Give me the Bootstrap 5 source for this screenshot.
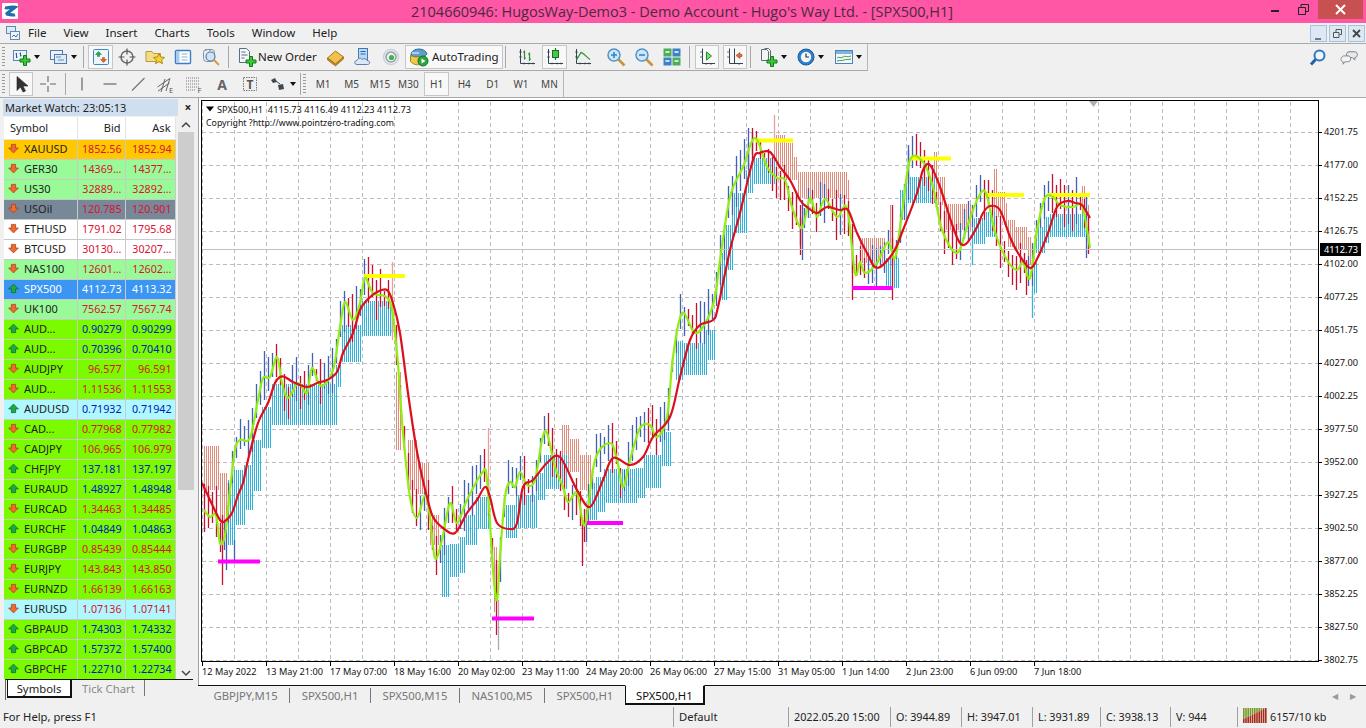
<!DOCTYPE html>
<html lang="en">
<head>
<meta charset="UTF-8">
<title>MetaTrader - SPX500,H1</title>
<link href="https://cdn.jsdelivr.net/npm/bootstrap@5.3.0/dist/css/bootstrap.min.css" rel="stylesheet">
<style>
  html, body { height: 728px; overflow: hidden; }
  body { background: #f0f0f0; font-family: "Noto Sans", sans-serif; font-size: 12px; color: #222; }
  .title-bar { height: 23px; background: #ff56a6; color: #4a2a3c; font-family: "Open Sans", sans-serif; font-size: 14.5px; }
  .title-text { left: 0; right: 0; top: 0; line-height: 23px; text-align: center; padding-right: 2px; }
  .app-logo { width: 16px; height: 16px; margin-left: 2px; margin-top: 3px; }
  .win-btn { width: 28px; height: 19px; }
  .win-close { width: 45px; height: 19px; background: #c75050; margin-left: 1px; margin-right: 3px; }
  .menu-bar { height: 21px; border-bottom: 1px solid #a9a9a9; padding-left: 5px; gap: 17px; font-size: 11.5px; }
  .menu-bar .menu-ico { width: 16px; height: 16px; margin-right: -10px; }
  .mdi-wrap { margin-right: 1px; }
  .mdi-btn { width: 17px; height: 17px; background: #dce9f5; border: 1px solid #a9c2da; margin-left: 2px; }
  .tool-row { height: 27px; }
  .tool-group { height: 27px; border-bottom: 1px solid #a9a9a9; }
  .row-a { width: 868px; border-right: 1px solid #b8b8b8; }
  .row-b { width: 564px; border-right: 1px solid #b8b8b8; }
  .row-fill { border-bottom: 1px solid #a9a9a9; height: 27px; }
  .row-plain { height: 27px; }
  .grip { width: 3px; height: 20px; margin: 0 3px 0 2px; background: repeating-linear-gradient(#9a9a9a 0 1px, transparent 1px 3px); flex: none; }
  .sep { width: 1px; height: 22px; background: #a8a8a8; flex: none; }
  .tool { height: 24px; flex: none; display: flex; align-items: center; justify-content: center; }
  .tool svg { width: 20px; height: 20px; flex: none; }
  .pressed { background: #f8f8f8; border: 1px solid #c6c6c6; }
  .drop { width: 0; height: 0; border: 3.5px solid transparent; border-top: 4px solid #111; border-bottom: 0; margin-left: 2px; flex: none; }
  .w1 { margin-left: 1px; } .w2 { margin-left: 2px; } .w3 { margin-left: 3px; } .w4 { margin-left: 4px; } .w5 { margin-left: 5px; } .w6 { margin-left: 6px; }
  .t24 { width: 24px; } .t25 { width: 25px; } .t27 { width: 27px; } .t28 { width: 28px; } .t30 { width: 30px; }
  .t32 { width: 32px; } .t34 { width: 34px; } .t35 { width: 35px; } .t36 { width: 36px; } .t37 { width: 37px; } .t38 { width: 38px; }
  .tool-wide { width: 90px; justify-content: flex-start; padding-left: 5px; gap: 1px; font-size: 11.5px; }
  .tool-auto { width: 98px; justify-content: flex-start; padding-left: 3px; gap: 3px; font-size: 11.5px; }
  .tf { width: 28.4px; height: 24px; font-size: 10px; color: #444; flex: none; display: flex; align-items: center; justify-content: center; }
  .tf-on { width: 25px; margin-left: 1.5px; margin-right: 1px; background: #f8f8f8; border: 1px solid #c6c6c6; }
  .left-panel { width: 198px; flex: none; height: 608px; }
  .mw-head { height: 17px; margin: 1px 0 1px 3px; width: 175px; background: #cfdff0; line-height: 17px; padding-left: 2px; font-size: 11px; }
  .mw-x { width: 20px; text-align: center; font-weight: 700; line-height: 17px; font-size: 12px; margin-top: 1px; }
  .mw-body { height: 562px; padding-left: 4px; }
  .mw-table { width: 171px; table-layout: fixed; font-size: 10.7px; background: #fff; }
  .mw-table th { height: 22px; font-weight: 400; background: #fff; border-right: 1px solid #e4e4e4; border-bottom: 1px solid #e4e4e4; padding: 0 4px; text-align: right; font-size: 11px; }
  .mw-table th:first-child { text-align: left; padding-left: 6px; }
  .mw-table td { height: 20px; padding: 0 3px 0 0; text-align: right; border-right: 1px solid #c9c9c9; border-bottom: 1px solid #c9c9c9; white-space: nowrap; overflow: hidden; }
  .mw-table td:first-child { text-align: left; padding-left: 4px; font-size: 11px; }
  .mw-table svg { width: 11px; height: 11px; margin-right: 5px; vertical-align: -1px; }
  .c-sym { width: 73px; } .c-bid { width: 48px; } .c-ask { width: 50px; }
  .bg-gold { background: #ffc800; } .bg-pale { background: #98fb98; } .bg-slate { background: #778899; }
  .bg-white2 { background: #fff; } .bg-sel { background: #3b96f3; color: #fff; } .bg-lawn { background: #7cfa00; } .bg-aqua { background: #b0f8ff; }
  .px-dn { color: #dc1030; } .px-up { color: #0018c0; } .px-wh { color: #fff; }
  .scroll-v { width: 16px; margin-left: 2px; height: 562px; background: #f0f0f0; }
  .scroll-top { height: 15px; }
  .scroll-thumb { height: 358px; background: #cdcdcd; }
  .scroll-end { bottom: 2px; left: 3px; }
  .side-tabs { height: 21px; margin-left: 5px; width: 188px; border-top: 1px solid #111; border-left: 1px solid #666; font-size: 11.3px; }
  .side-tab-on { width: 65px; height: 19px; margin-left: 1px; margin-top: -1px; background: #fff; border: 1px solid #111; border-top: 1px solid #111; border-right-width: 2px; border-bottom-width: 2px; text-align: center; line-height: 17px; }
  .side-tab { color: #8a8a8a; padding: 0 9px; line-height: 18px; border-right: 1px solid #777; height: 16px; margin-left: 1px; }
  .chart-col { width: 1168px; }
  .chart-svg { width: 1168px; height: 587px; display: block; background: #fff; }
  .chart-svg text { font-family: "Noto Sans", sans-serif; font-size: 9.2px; fill: #111; }
  .chart-svg text.copy-line { font-size: 8.800px; }
  .chart-tabs { height: 21px; padding-left: 4px; font-size: 11.3px; color: #777; border-top: 1px solid #111; }
  .ctab { padding: 0 11.500px; border-right: 1px solid #777; height: 15px; line-height: 15px; margin-top: 2px; }
  .ctab-last { border-right: 0; }
  .ctab-on { color: #111; background: #fff; width: 80px; height: 20px; margin-top: -1px; text-align: center; line-height: 19px; border: 1px solid #111; border-top-color: #fff; border-right-width: 2px; border-bottom-width: 2px; }
  .tab-arrow { color: #999; font-size: 8px; width: 18px; text-align: center; line-height: 19px; }
  .status-bar { height: 22px; font-size: 11.2px; line-height: 22px; padding-left: 3px; }
  .st { border-left: 1px solid #a0a0a0; height: 20px; line-height: 20px; padding-left: 5px; margin-top: 1px; flex: none; }
  .st-num { font-size: 10.8px; }
  .st115 { width: 115px; } .st102 { width: 102px; } .st71 { width: 71px; } .st68 { width: 68px; } .st70 { width: 70px; } .st67 { width: 67px; } .st129 { width: 129px; }
  .kb-bars { width: 24px; height: 16px; vertical-align: -3px; margin-right: 3px; }
</style>
</head>
<body>

<svg class="d-none">
  <symbol id="plus" viewBox="0 0 20 20"><path d="M11.500 8.500h3v3.500h3.500v3h-3.500v3.500h-3v-3.500h-3.500v-3h3.500z" fill="#38c838" stroke="#127c12"/></symbol>
  <symbol id="i-newchart" viewBox="0 0 20 20"><rect x="1.500" y="3.500" width="13" height="10" fill="#eaf2fb" stroke="#5a86b4"/><path d="M4.500 6v5M3.500 7h1M4.500 10h1M8.500 5.500v4M7.500 6.500h1M8.500 8.500h1" stroke="#2f5f8f"/><use href="#plus"/></symbol>
  <symbol id="i-profiles" viewBox="0 0 20 20"><rect x="1.500" y="3.500" width="12" height="9" fill="#eaf2fb" stroke="#4d7cb0"/><rect x="5.500" y="7.500" width="12" height="9" fill="#dfeaf6" stroke="#4d7cb0"/><path d="M7 10h5M9 13h6" stroke="#6a8fb5"/></symbol>
  <symbol id="i-watch" viewBox="0 0 20 20"><rect x="2.500" y="2.500" width="15" height="15" rx="1" fill="#eef6fc" stroke="#3c86c8"/><path d="M7.500 4.500l3 3h-2v2h-2v-2h-2z" fill="#2aa84a" stroke="#16743a" stroke-width=".5"/><path d="M12.500 15.500l-3-3h2v-2h2v2h2z" fill="#e8622c" stroke="#a83c14" stroke-width=".5"/></symbol>
  <symbol id="i-cross" viewBox="0 0 20 20"><circle cx="10" cy="10" r="6" fill="none" stroke="#6a6a6a" stroke-width="1.500"/><path d="M10 1.500v6M10 12.500v6M1.500 10h6M12.500 10h6" stroke="#555" stroke-width="1.200"/></symbol>
  <symbol id="i-folder" viewBox="0 0 20 20"><path d="M1 4.500h6l1.500 2h7v8H1z" fill="#f6dc84" stroke="#b99a3c"/><path d="M14 6.500l1.600 3.500 3.900.4-2.900 2.500.9 3.800-3.500-2-3.500 2 .9-3.800-2.900-2.500 3.900-.4z" fill="#f8d030" stroke="#b08a18"/></symbol>
  <symbol id="i-nav" viewBox="0 0 20 20"><rect x="2.500" y="3.500" width="15" height="13" rx="1" fill="#fff" stroke="#3a7dc0" stroke-width="1.400"/><rect x="3" y="4" width="3.500" height="12" fill="#a8cdf0"/><path d="M8.500 7h6M8.500 10h6M8.500 13h6" stroke="#8ab0d4"/></symbol>
  <symbol id="i-tester" viewBox="0 0 20 20"><rect x="2.500" y="2.500" width="11" height="12" rx="3" fill="#e6edf6" stroke="#7f93aa"/><circle cx="9.500" cy="9.500" r="4.500" fill="#cfe3f6" stroke="#5c7a9a" stroke-width="1.200"/><path d="M13 13l5 5" stroke="#d89a3a" stroke-width="2"/><path d="M5 2v2M9 2v2" stroke="#6c7f95"/></symbol>
  <symbol id="i-order" viewBox="0 0 20 20"><path d="M2.500 1.500h7l3 3v11h-10z" fill="#f4f6f8" stroke="#566d82"/><path d="M4.500 5h4M4.500 8h6M4.500 11h3" stroke="#4f6f90"/><use href="#plus" x="1" y="1"/></symbol>
  <symbol id="i-book" viewBox="0 0 20 20"><path d="M1.500 11l8-7 8 6-8 7z" fill="#f2c04c" stroke="#a87a1c"/><path d="M1.500 11v2l8 6 8-7v-2l-8 7z" fill="#c88a24" stroke="#8a5f14" stroke-width=".6"/></symbol>
  <symbol id="i-server" viewBox="0 0 20 20"><rect x="5.500" y="1.500" width="9" height="12" fill="#bcd8f2" stroke="#3f78b8"/><path d="M7.500 4.500h5M7.500 7h5" stroke="#2f66a4"/><path d="M4 17.500c-3 0-3-4 0-4 .5-2.500 4-3 5-1 2-1.500 4.500-1 5 1 3.500 0 3.500 4 .5 4z" fill="#dce8f6" stroke="#5f80ac"/></symbol>
  <symbol id="i-signal" viewBox="0 0 20 20"><circle cx="10" cy="10" r="7.500" fill="none" stroke="#c8d2d8" stroke-width="1.500"/><circle cx="10" cy="10" r="5" fill="none" stroke="#8ca0aa" stroke-width="1.500"/><circle cx="10.500" cy="10.500" r="2.600" fill="#46b04a"/></symbol>
  <symbol id="i-auto" viewBox="0 0 20 20"><path d="M2 8c0-4 4-6 8-6s7 2 8 5l-4 3H5z" fill="#5e9fd0" stroke="#2f6d9f"/><path d="M1.500 8.500c4 2 10 2 13 0l1 5-4 4c-4 1-8-.5-10-3z" fill="#f2c84a" stroke="#a58420"/><path d="M3 6h7" stroke="#fff"/><circle cx="14" cy="14" r="5" fill="#2aa83c" stroke="#12742a"/><path d="M12.500 11.500l4 2.500-4 2.500z" fill="#fff"/></symbol>
  <symbol id="i-bars" viewBox="0 0 20 20"><path d="M3.500 2v14.500H18" stroke="#33434f" fill="none"/><path d="M2 5h3M2 10h3M7 17.500v-2M12 17.500v-2M16 17.500v-2" stroke="#33434f" stroke-width=".7"/><path d="M7.500 3.500v9M6 5h1.500M7.500 11H9M12.500 5.500v8.500M11 7h1.500M12.500 12H14" stroke="#2f8a3a" stroke-width="1.200"/></symbol>
  <symbol id="i-candle" viewBox="0 0 20 20"><path d="M3.500 2v14.500H18" stroke="#33434f" fill="none"/><path d="M2 5h3M2 10h3M7 17.500v-2M12 17.500v-2M16 17.500v-2" stroke="#33434f" stroke-width=".7"/><path d="M10.500 1v12" stroke="#16741e" stroke-width="1.200"/><rect x="7.500" y="3.500" width="6" height="7" fill="#42c84a" stroke="#16741e"/></symbol>
  <symbol id="i-line" viewBox="0 0 20 20"><path d="M3.500 2v14.500H18" stroke="#33434f" fill="none"/><path d="M2 5h3M2 10h3M7 17.500v-2M12 17.500v-2M16 17.500v-2" stroke="#33434f" stroke-width=".7"/><path d="M3.500 13L8 5.500c2 0 5 4 9 7" stroke="#2f9a3f" stroke-width="1.300" fill="none"/></symbol>
  <symbol id="i-zin" viewBox="0 0 20 20"><circle cx="8" cy="8" r="6" fill="#cfe6f8" stroke="#4f94c8" stroke-width="1.500"/><path d="M5 8h6M8 5v6" stroke="#3585c0" stroke-width="1.600"/><path d="M12.500 12.500l6 6" stroke="#c89438" stroke-width="2.600"/></symbol>
  <symbol id="i-zout" viewBox="0 0 20 20"><circle cx="8" cy="8" r="6" fill="#cfe6f8" stroke="#4f94c8" stroke-width="1.500"/><path d="M5 8h6" stroke="#3585c0" stroke-width="1.600"/><path d="M12.500 12.500l6 6" stroke="#c89438" stroke-width="2.600"/></symbol>
  <symbol id="i-tile" viewBox="0 0 20 20"><rect x="1.500" y="1.500" width="8" height="8" fill="#4cae5a"/><rect x="10.500" y="1.500" width="8" height="8" fill="#3c82c8"/><rect x="1.500" y="10.500" width="8" height="8" fill="#3c82c8"/><rect x="10.500" y="10.500" width="8" height="8" fill="#4cae5a"/><path d="M3.500 5h4M12.500 5h4M3.500 14h4M12.500 14h4" stroke="#fff" stroke-width="1.500"/></symbol>
  <symbol id="i-scroll" viewBox="0 0 20 20"><path d="M5.500 1.500v15H18" stroke="#33434f" fill="none"/><path d="M3 5h3M3 10h3M9 18v-2M14 18v-2" stroke="#33434f" stroke-width=".7"/><path d="M9.500 5l5 4-5 4z" fill="#7adf6a" stroke="#1f8a2c"/></symbol>
  <symbol id="i-shift" viewBox="0 0 20 20"><path d="M4.500 1.500v15H18M9.500 1.500v15" stroke="#33434f" fill="none"/><path d="M2 5h3M2 10h3M14 18v-2" stroke="#33434f" stroke-width=".7"/><path d="M11 8.500l4-3v2h2v2h-2v2z" fill="#e0703c" stroke="#a33c18" stroke-width=".6"/></symbol>
  <symbol id="i-docplus" viewBox="0 0 20 20"><path d="M2.500 2.500h5l2 2v9h-7z" fill="#f2f3f5" stroke="#5f6a74"/><path d="M5.500 1.500h4l2 2v6" fill="none" stroke="#5f6a74"/><use href="#plus" x="0" y="1"/></symbol>
  <symbol id="i-clock" viewBox="0 0 20 20"><circle cx="10" cy="10" r="8" fill="#2f80c8" stroke="#1a5a96"/><circle cx="10" cy="10" r="5.200" fill="#f2f7fb"/><path d="M10 6.500V10h3" stroke="#333" stroke-width="1.200" fill="none"/></symbol>
  <symbol id="i-tmpl" viewBox="0 0 20 20"><rect x="1.500" y="3.500" width="17" height="13" fill="#f2f7fb" stroke="#4d82b4"/><rect x="2" y="4" width="16" height="3" fill="#7fb2dc"/><path d="M3 11c2-2 4 1 6-1s4 1 8-1M3 14c3-1 5 0 7-1s4 0 7-1" stroke="#4a9a50" fill="none"/></symbol>
  <symbol id="i-search" viewBox="0 0 20 20"><circle cx="11.500" cy="7.500" r="5" fill="#eef6fd" stroke="#2f75c4" stroke-width="2"/><path d="M7.500 11.500L3 16.500" stroke="#2460a8" stroke-width="3"/></symbol>
  <symbol id="i-chat" viewBox="0 0 24 20"><path d="M12 2.500h7c4 0 4 7 0 7v3l-3-3h-4c-4 0-4-7 0-7z" fill="#e6e8ea" stroke="#666c72"/><path d="M6 7.500h5c4 0 4 7 0 7H7l-2 3v-3c-4 0-3-7 1-7z" fill="#f2f3f4" stroke="#72787e"/></symbol>
  <symbol id="i-arrow" viewBox="0 0 20 20"><path d="M6 2.500v14l3.500-3.500 2.500 5 2.500-1-2.500-5H17z" fill="#333" stroke="#222" stroke-width=".6"/></symbol>
  <symbol id="i-thin" viewBox="0 0 20 20"><path d="M10 2v6M10 12v6M2 10h6M12 10h6" stroke="#666" stroke-width="1.100"/></symbol>
  <symbol id="i-vline" viewBox="0 0 20 20"><path d="M10 3.500v13" stroke="#666" stroke-width="1.200"/></symbol>
  <symbol id="i-hline" viewBox="0 0 20 20"><path d="M3.500 10h13" stroke="#666" stroke-width="1.200"/></symbol>
  <symbol id="i-trend" viewBox="0 0 20 20"><path d="M4 16.500L16.500 4" stroke="#777" stroke-width="1.200"/></symbol>
  <symbol id="i-channel" viewBox="0 0 20 20"><path d="M1.500 13L13 5M2 17l11.500-8M5 18L9 5M10 17l4-13" stroke="#666"/><text x="13" y="19" font-size="7.500" fill="#555" font-family="Noto Sans, sans-serif">E</text></symbol>
  <symbol id="i-fibo" viewBox="0 0 20 20"><path d="M2 4h13M2 7h13M2 10h13M2 13h13M2 16h9" stroke="#777" stroke-dasharray="1 1"/><text x="13.500" y="19" font-size="7.500" fill="#555" font-family="Noto Sans, sans-serif">F</text></symbol>
  <symbol id="i-atext" viewBox="0 0 20 20"><text x="10" y="15.500" text-anchor="middle" font-size="14" fill="#666" font-weight="700" font-family="Noto Sans, sans-serif">A</text></symbol>
  <symbol id="i-ttext" viewBox="0 0 20 20"><rect x="3.500" y="3.500" width="13" height="13" fill="none" stroke="#777" stroke-dasharray="1.500 1"/><text x="10" y="14.500" text-anchor="middle" font-size="12" fill="#555" font-weight="700" font-family="Noto Sans, sans-serif">T</text></symbol>
  <symbol id="i-arrows" viewBox="0 0 20 20"><path d="M3 6l4-2 2 4-4 1z" fill="#3e4a52"/><path d="M10 11l5-1 1 5-5 1z" fill="#3e4a52"/><path d="M8 7l4 3" stroke="#3e4a52"/></symbol>
  <symbol id="tk-up" viewBox="0 0 12 12"><path d="M6 1.200L11.300 6.500H8.300V10.500H3.700V6.500H.7z" fill="#1fa84a" stroke="#0c6a2c" stroke-width=".8"/></symbol>
  <symbol id="tk-dn" viewBox="0 0 12 12"><path d="M6 10.800L.7 5.500H3.700V1.500H8.300V5.500H11.300z" fill="#ee6a30" stroke="#a83c14" stroke-width=".8"/></symbol>
</svg>

<div class="d-flex flex-column vh-100 overflow-hidden">

  <div class="title-bar d-flex align-items-start position-relative flex-none">
    <svg class="app-logo position-relative z-1" viewBox="0 0 16 16"><rect width="16" height="16" rx="1" fill="#fff"/><path d="M3 4.500c3 1.200 7-1.200 10-.2L4 11.300c3-.8 6 1.500 9 .5" fill="none" stroke="#1d6fa8" stroke-width="3.200"/></svg>
    <div class="title-text position-absolute">2104660946: HugosWay-Demo3 - Demo Account - Hugo's Way Ltd. - [SPX500,H1]</div>
    <div class="ms-auto d-flex position-relative z-1">
      <div class="win-btn d-flex align-items-center justify-content-center"><svg width="10" height="10" viewBox="0 0 10 10"><path d="M1 6h8" stroke="#222" stroke-width="2"/></svg></div>
      <div class="win-btn d-flex align-items-center justify-content-center"><svg width="11" height="11" viewBox="0 0 11 11"><path d="M.5 3.500h7v7h-7zM3 3V.500h7.500v7H8" fill="none" stroke="#222"/></svg></div>
      <div class="win-close d-flex align-items-center justify-content-center"><svg width="11" height="11" viewBox="0 0 11 11"><path d="M1 1l9 9M10 1l-9 9" stroke="#fff" stroke-width="2"/></svg></div>
    </div>
  </div>

  <div class="menu-bar d-flex align-items-center">
    <svg class="menu-ico" viewBox="0 0 16 16"><rect x="1.500" y="1.500" width="9" height="7" fill="#dfeaf6" stroke="#5f8ab4"/><rect x="5.500" y="6.500" width="9" height="8" fill="#eef4fa" stroke="#5f8ab4"/><path d="M7 12l2-2 2 2 2-3" stroke="#3c6f9f" fill="none"/></svg>
    <span>File</span><span>View</span><span>Insert</span><span>Charts</span><span>Tools</span><span>Window</span><span>Help</span>
    <div class="ms-auto d-flex mdi-wrap">
      <div class="mdi-btn d-flex align-items-end justify-content-center"><svg width="9" height="9" viewBox="0 0 9 9"><path d="M1 7h6" stroke="#555" stroke-width="1.500"/></svg></div>
      <div class="mdi-btn d-flex align-items-center justify-content-center"><svg width="11" height="11" viewBox="0 0 11 11"><path d="M1.500 4.500h5.500v5h-5.500zM4 4V1.500h5.500v5H7.500" fill="none" stroke="#555"/></svg></div>
      <div class="mdi-btn d-flex align-items-center justify-content-center"><svg width="11" height="11" viewBox="0 0 11 11"><path d="M2 2l7 7M9 2l-7 7" stroke="#444" stroke-width="1.800"/></svg></div>
    </div>
  </div>

  <div class="tool-row d-flex">
    <div class="tool-group row-a d-flex align-items-center">
      <span class="grip"></span>
      <div class="tool t35"><svg><use href="#i-newchart"/></svg><span class="drop"></span></div>
      <div class="tool t35 w2"><svg><use href="#i-profiles"/></svg><span class="drop"></span></div>
      <span class="sep w3"></span>
      <div class="tool t25 pressed w4"><svg><use href="#i-watch"/></svg></div>
      <div class="tool t28"><svg><use href="#i-cross"/></svg></div>
      <div class="tool t28"><svg><use href="#i-folder"/></svg></div>
      <div class="tool t28"><svg><use href="#i-nav"/></svg></div>
      <div class="tool t28"><svg><use href="#i-tester"/></svg></div>
      <span class="sep w3"></span>
      <div class="tool tool-wide w3"><svg><use href="#i-order"/></svg><span>New Order</span></div>
      <div class="tool t27"><svg><use href="#i-book"/></svg></div>
      <div class="tool t28"><svg><use href="#i-server"/></svg></div>
      <div class="tool t28"><svg><use href="#i-signal"/></svg></div>
      <div class="tool tool-auto pressed"><svg><use href="#i-auto"/></svg><span>AutoTrading</span></div>
      <span class="sep w2"></span>
      <div class="tool t30 w6"><svg><use href="#i-bars"/></svg></div>
      <div class="tool t25 pressed"><svg><use href="#i-candle"/></svg></div>
      <div class="tool t32"><svg><use href="#i-line"/></svg></div>
      <div class="tool t28 w3"><svg><use href="#i-zin"/></svg></div>
      <div class="tool t28"><svg><use href="#i-zout"/></svg></div>
      <div class="tool t28"><svg><use href="#i-tile"/></svg></div>
      <span class="sep w3"></span>
      <div class="tool t24 pressed w5"><svg><use href="#i-scroll"/></svg></div>
      <div class="tool t24 pressed w4"><svg><use href="#i-shift"/></svg></div>
      <span class="sep w3"></span>
      <div class="tool t37 w3"><svg><use href="#i-docplus"/></svg><span class="drop"></span></div>
      <div class="tool t38"><svg><use href="#i-clock"/></svg><span class="drop"></span></div>
      <div class="tool t37"><svg><use href="#i-tmpl"/></svg><span class="drop"></span></div>
    </div>
    <div class="row-plain flex-grow-1 d-flex align-items-center justify-content-end">
      <div class="tool t28"><svg><use href="#i-search"/></svg></div>
      <div class="tool t34"><svg><use href="#i-chat"/></svg></div>
    </div>
  </div>

  <div class="tool-row d-flex">
    <div class="tool-group row-b d-flex align-items-center">
      <span class="grip"></span>
      <div class="tool t24 pressed w1"><svg><use href="#i-arrow"/></svg></div>
      <div class="tool t28 w1"><svg><use href="#i-thin"/></svg></div>
      <span class="sep w3"></span>
      <div class="tool t28 w2"><svg><use href="#i-vline"/></svg></div>
      <div class="tool t28"><svg><use href="#i-hline"/></svg></div>
      <div class="tool t28"><svg><use href="#i-trend"/></svg></div>
      <div class="tool t28"><svg><use href="#i-channel"/></svg></div>
      <div class="tool t28"><svg><use href="#i-fibo"/></svg></div>
      <div class="tool t28"><svg><use href="#i-atext"/></svg></div>
      <div class="tool t28"><svg><use href="#i-ttext"/></svg></div>
      <div class="tool t36"><svg><use href="#i-arrows"/></svg><span class="drop"></span></div>
      <span class="sep"></span>
      <span class="grip"></span>
      <div class="tf">M1</div><div class="tf">M5</div><div class="tf">M15</div><div class="tf">M30</div>
      <div class="tf tf-on">H1</div>
      <div class="tf">H4</div><div class="tf">D1</div><div class="tf">W1</div><div class="tf">MN</div>
    </div>
    <div class="row-fill flex-grow-1"></div>
  </div>

  <div class="d-flex">
    <div class="left-panel">
      <div class="d-flex">
        <div class="mw-head">Market Watch: 23:05:13</div>
        <div class="mw-x">×</div>
      </div>
      <div class="mw-body d-flex overflow-hidden">
        <table class="mw-table">
          <colgroup><col class="c-sym"><col class="c-bid"><col class="c-ask"></colgroup>
          <thead><tr><th>Symbol</th><th>Bid</th><th>Ask</th></tr></thead>
          <tbody id="mwRows"></tbody>
        </table>
        <div class="scroll-v position-relative">
          <div class="scroll-top d-flex align-items-center justify-content-center"><svg width="10" height="7" viewBox="0 0 10 7"><path d="M1 6l4-4 4 4" fill="none" stroke="#444" stroke-width="1.500"/></svg></div>
          <div class="scroll-thumb"></div>
          <svg class="scroll-end position-absolute" width="10" height="7" viewBox="0 0 10 7"><path d="M1 1l4 4 4-4" fill="none" stroke="#444" stroke-width="1.500"/></svg>
        </div>
      </div>
      <div class="side-tabs d-flex">
        <div class="side-tab-on">Symbols</div>
        <div class="side-tab">Tick Chart</div>
      </div>
    </div>

    <div class="chart-col">
      <svg id="chart" class="chart-svg" viewBox="198 98 1168 587"></svg>
      <div class="chart-tabs d-flex">
        <div class="ctab">GBPJPY,M15</div>
        <div class="ctab">SPX500,H1</div>
        <div class="ctab">SPX500,M15</div>
        <div class="ctab">NAS100,M5</div>
        <div class="ctab ctab-last">SPX500,H1</div>
        <div class="ctab-on">SPX500,H1</div>
        <div class="ms-auto d-flex me-1"><span class="tab-arrow">◀</span><span class="tab-arrow">▶</span></div>
      </div>
    </div>
  </div>

  <div class="status-bar d-flex">
    <div class="flex-grow-1">For Help, press F1</div>
    <div class="st st115">Default</div>
    <div class="st st102 st-num">2022.05.20 15:00</div>
    <div class="st st71 st-num">O: 3944.89</div>
    <div class="st st71 st-num">H: 3947.01</div>
    <div class="st st68 st-num">L: 3931.89</div>
    <div class="st st70 st-num">C: 3938.13</div>
    <div class="st st67 st-num">V: 944</div>
    <div class="st st129 st-num"><svg class="kb-bars" viewBox="0 0 24 16" id="kbBars"></svg>6157/10 kb</div>
  </div>
</div>

<script src="https://cdn.jsdelivr.net/npm/bootstrap@5.3.0/dist/js/bootstrap.bundle.min.js"></script>
<script>
  // market watch rows: symbol, bid, ask, row colour, tick direction
  const rows = [
    ['XAUUSD','1852.56','1852.94','bg-gold','dn'],
    ['GER30','14369...','14377...','bg-pale','dn'],
    ['US30','32889...','32892...','bg-pale','dn'],
    ['USOil','120.785','120.901','bg-slate','dn'],
    ['ETHUSD','1791.02','1795.68','bg-white2','dn'],
    ['BTCUSD','30130...','30207...','bg-white2','dn'],
    ['NAS100','12601...','12602...','bg-pale','dn'],
    ['SPX500','4112.73','4113.32','bg-sel','up'],
    ['UK100','7562.57','7567.74','bg-pale','dn'],
    ['AUD...','0.90279','0.90299','bg-lawn','up'],
    ['AUD...','0.70396','0.70410','bg-lawn','up'],
    ['AUDJPY','96.577','96.591','bg-lawn','dn'],
    ['AUD...','1.11536','1.11553','bg-lawn','dn'],
    ['AUDUSD','0.71932','0.71942','bg-aqua','up'],
    ['CAD...','0.77968','0.77982','bg-lawn','dn'],
    ['CADJPY','106.965','106.979','bg-lawn','dn'],
    ['CHFJPY','137.181','137.197','bg-lawn','up'],
    ['EURAUD','1.48927','1.48948','bg-lawn','up'],
    ['EURCAD','1.34463','1.34485','bg-lawn','dn'],
    ['EURCHF','1.04849','1.04863','bg-lawn','up'],
    ['EURGBP','0.85439','0.85444','bg-lawn','dn'],
    ['EURJPY','143.843','143.850','bg-lawn','dn'],
    ['EURNZD','1.66139','1.66163','bg-lawn','dn'],
    ['EURUSD','1.07136','1.07141','bg-aqua','dn'],
    ['GBPAUD','1.74303','1.74332','bg-lawn','up'],
    ['GBPCAD','1.57372','1.57400','bg-lawn','up'],
    ['GBPCHF','1.22710','1.22734','bg-lawn','up']
  ];
  document.getElementById('mwRows').innerHTML = rows.map(r => {
    const px = r[3] === 'bg-sel' ? 'px-wh' : (r[4] === 'up' ? 'px-up' : 'px-dn');
    return `<tr class="${r[3]}"><td><svg><use href="#tk-${r[4]}"/></svg>${r[0]}</td><td class="${px}">${r[1]}</td><td class="${px}">${r[2]}</td></tr>`;
  }).join('');

  // chart data, in page pixels
  const red = [[202,483],[210,500],[220,520],[225,521],[232,513],[238,495],[243,483],[248,460],[258,423],[268,403],[275,383],[280,377],[285,377],[293,382],[307,387],[317,383],[327,380],[337,372],[343,353],[353,333],[360,310],[367,300],[377,292],[387,290],[393,303],[400,333],[408,393],[415,440],[420,467],[427,497],[433,517],[443,528],[455,533],[467,513],[477,500],[485,487],[490,497],[497,523],[510,529],[517,523],[523,487],[533,480],[547,463],[560,457],[577,490],[590,507],[603,480],[613,458],[630,465],[643,457],[653,437],[670,417],[680,377],[690,340],[700,325],[713,320],[718,307],[730,250],[740,213],[753,160],[760,153],[770,152],[780,167],[790,180],[800,200],[807,207],[817,213],[827,207],[840,210],[848,210],[857,233],[867,253],[877,268],[893,253],[903,230],[917,193],[923,170],[930,165],[940,187],[953,227],[960,243],[967,243],[977,227],[983,213],[990,206],[1000,210],[1010,237],[1018,253],[1030,268],[1038,257],[1048,233],[1057,207],[1067,201],[1075,203],[1082,205],[1090,218]];
  const green = [[204,510],[210,517],[216,515],[220,543],[225,535],[230,490],[235,450],[240,440],[250,438],[258,400],[263,378],[270,377],[277,357],[282,383],[288,398],[298,383],[307,393],[312,368],[321,386],[333,370],[340,327],[345,302],[353,320],[360,303],[365,278],[373,293],[390,302],[397,353],[403,433],[410,497],[417,518],[425,495],[430,517],[435,558],[442,540],[450,503],[457,523],[467,500],[482,473],[487,480],[493,570],[497,600],[500,557],[505,497],[510,482],[515,487],[520,472],[527,485],[535,480],[542,440],[547,433],[555,467],[563,487],[568,502],[577,493],[585,525],[595,460],[610,443],[617,460],[623,487],[630,460],[640,428],[650,425],[657,437],[667,417],[673,357],[682,313],[695,333],[707,320],[715,297],[720,260],[730,197],[743,167],[755,138],[767,167],[777,178],[785,180],[792,207],[802,228],[810,198],[817,217],[825,199],[837,217],[847,208],[855,273],[860,262],[865,273],[877,263],[888,242],[895,258],[902,213],[910,160],[923,162],[933,187],[942,230],[957,253],[967,227],[978,198],[986,193],[995,232],[1007,260],[1017,270],[1023,262],[1030,278],[1037,230],[1045,198],[1053,197],[1060,205],[1073,207],[1082,205],[1087,230],[1090,248]];
  // cloud steps: x from, x to, top, bottom
  const blue = [[228,235,480,545],[235,245,470,525],[245,253,465,510],[253,262,440,491],[262,272,407,448],[272,337,384,425],[337,342,365,387],[342,362,325,362],[362,393,301,336],[443,450,545,597],[450,460,544,577],[460,466,537,573],[466,477,515,545],[477,490,497,529],[507,517,505,538],[517,537,495,528],[537,545,473,500],[545,567,455,489],[590,597,483,520],[597,605,477,512],[605,637,469,503],[637,645,468,498],[645,662,455,488],[662,672,432,466],[677,683,341,380],[683,707,343,375],[707,716,330,360],[720,727,253,300],[727,733,225,270],[733,747,193,233],[747,753,170,193],[753,775,158,184],[887,900,258,288],[900,907,190,220],[907,935,177,203],[973,985,218,244],[985,995,212,237],[1032,1037,263,293],[1037,1045,227,253],[1045,1050,217,243],[1050,1085,214,237]];
  const salmon = [[204,220,446,490],[220,228,473,520],[397,402,372,450],[408,417,440,490],[417,430,463,494],[430,440,515,545],[494,497,547,612],[563,570,425,470],[565,580,439,472],[580,592,455,490],[775,776,115,150],[775,785,135,167],[785,793,143,180],[793,798,157,180],[798,848,172,198],[848,850,180,205],[860,885,238,263],[891,894,205,243],[935,937,152,180],[937,945,177,205],[945,972,204,230],[995,997,169,215],[997,1005,192,217],[1005,1008,203,225],[1008,1015,220,247],[1015,1028,227,250],[1028,1032,237,265],[1083,1085,186,217],[1085,1090,205,225]];
  const spikes = [[222,515,585,'#c8102e'],[226,520,570,'#3f62b4'],[234,540,560,'#3f62b4'],[392,262,340,'#e8a090'],[488,428,500,'#e8a090'],[496,560,635,'#c8102e'],[498,600,650,'#a9a9b5'],[582,520,566,'#c8102e'],[586,510,542,'#3f62b4'],[748,128,170,'#3f62b4'],[752,128,165,'#c8102e'],[802,200,260,'#3f62b4'],[800,205,255,'#c8102e'],[774,115,150,'#e8a090'],[852,240,300,'#c8102e'],[892,205,300,'#c8102e'],[972,240,265,'#37b4dc'],[1032,290,318,'#37b4dc'],[1026,260,295,'#c8102e'],[908,150,200,'#3f62b4'],[1086,195,258,'#3f62b4'],[1088,215,254,'#c8102e']];
  const yellow = [[364,405,276],[755,793,140.500],[910,951,158.500],[985,1024,195],[1048,1090,195]];
  const magenta = [[218,260,561.500],[492,534,618.500],[587,623,523],[852,893,288]];
  const priceLabels = ['4201.75','4177.00','4152.25','4126.75','4102.00','4077.25','4051.75','4027.00','4002.25','3977.50','3952.00','3927.25','3902.50','3877.00','3852.25','3827.50','3802.75'];
  const timeLabels = ['12 May 2022','13 May 21:00','17 May 07:00','18 May 16:00','20 May 02:00','23 May 11:00','24 May 20:00','26 May 06:00','27 May 15:00','31 May 05:00','1 Jun 14:00','2 Jun 23:00','6 Jun 09:00','7 Jun 18:00'];

  function yAt(line, x) {
    for (let i = 1; i < line.length; i++) {
      if (x <= line[i][0]) {
        const a = line[i - 1], b = line[i];
        return a[1] + (b[1] - a[1]) * (x - a[0]) / (b[0] - a[0]);
      }
    }
    return line[line.length - 1][1];
  }
  function rnd(n) { const s = Math.sin(n * 12.9898) * 43758.5453; return s - Math.floor(s); }
  function smooth(p) {
    let d = `M${p[0][0]} ${p[0][1]}`;
    for (let i = 0; i < p.length - 1; i++) {
      const a = p[Math.max(i - 1, 0)], b = p[i], c = p[i + 1], e = p[Math.min(i + 2, p.length - 1)];
      d += `C${(b[0] + (c[0] - a[0]) / 6).toFixed(1)} ${(b[1] + (c[1] - a[1]) / 6).toFixed(1)} ${(c[0] - (e[0] - b[0]) / 6).toFixed(1)} ${(c[1] - (e[1] - b[1]) / 6).toFixed(1)} ${c[0]} ${c[1]}`;
    }
    return d;
  }
  // hatch lines stay on even pixels, like the indicator's 2px histogram
  function hatch(steps) {
    let d = '';
    steps.forEach(s => { for (let x = s[0] - s[0] % 2; x < s[1]; x += 2) d += `M${x + 0.5} ${s[2]}V${s[3]}`; });
    return d;
  }

  let g = '';
  let gv = '', gh = '';
  for (let x = 202; x < 1318; x += 32) gv += `M${x + 0.5} 102V661`;
  for (let i = 0; i < 17; i++) gh += `M202 ${132 + 33 * i + 0.5}H1318`;
  g += `<path d="${gv}${gh}" stroke="#bdbdbd" stroke-dasharray="4 3" fill="none" shape-rendering="crispEdges"/>`;
  g += `<path d="${hatch(salmon)}" stroke="#e28c7c" fill="none" shape-rendering="crispEdges"/>`;
  g += `<path d="${hatch(blue)}" stroke="#2fb2dc" fill="none" shape-rendering="crispEdges"/>`;

  // price sticks hug the fast line
  let up = '', down = '';
  for (let x = 204; x <= 1090; x += 4) {
    const y = yAt(green, x), slope = yAt(green, x + 5) - yAt(green, x - 5);
    const top = y - 5 - rnd(x) * 24, bot = y + 4 + rnd(x + 1.5) * 22;
    const seg = `M${x + 0.5} ${top.toFixed(0)}V${bot.toFixed(0)}`;
    if (slope < -2 || (Math.abs(slope) <= 2 && rnd(x + 3) > 0.5)) up += seg; else down += seg;
  }
  g += `<path d="${up}" stroke="#3f62b4" stroke-width="1.300" fill="none"/><path d="${down}" stroke="#c8102e" stroke-width="1.300" fill="none"/>`;
  spikes.forEach(s => { g += `<path d="M${s[0] + 0.5} ${s[1]}V${s[2]}" stroke="${s[3]}" stroke-width="1.300"/>`; });

  g += `<path d="M202 249.500H1318" stroke="#c0c0c0" shape-rendering="crispEdges"/>`;
  yellow.forEach(b => { g += `<rect x="${b[0]}" y="${b[2] - 2}" width="${b[1] - b[0]}" height="4" fill="#ffff00"/>`; });
  magenta.forEach(b => { g += `<rect x="${b[0]}" y="${b[2] - 2}" width="${b[1] - b[0]}" height="4" fill="#ff00ff"/>`; });
  g += `<path d="${smooth(green)}" stroke="#90ee10" stroke-width="2.200" fill="none"/>`;
  g += `<path d="${smooth(red)}" stroke="#dc0f1e" stroke-width="2.200" fill="none"/>`;

  // frame and axes
  g += `<path d="M198.500 98V685" stroke="#a0a0a0" shape-rendering="crispEdges"/>`;
  g += `<rect x="201.500" y="100.500" width="1117" height="561" fill="none" stroke="#000" shape-rendering="crispEdges"/>`;
  g += `<path d="M1089 101h9l-4.500 6z" fill="#b0b0b0"/>`;
  priceLabels.forEach((t, i) => {
    const y = 132 + 33 * i;
    g += `<path d="M1318 ${y + 0.5}h4" stroke="#000" shape-rendering="crispEdges"/><text x="1324" y="${y + 3}">${t}</text>`;
  });
  timeLabels.forEach((t, i) => {
    const x = 202 + 64 * i;
    g += `<path d="M${x + 0.5} 662v4" stroke="#000" shape-rendering="crispEdges"/><text x="${x}" y="675">${t}</text>`;
  });
  g += `<rect x="1320" y="243" width="41" height="13" fill="#000"/><text x="1324" y="253" style="fill:#fff">4112.73</text>`;
  g += `<path d="M206 106.500h8l-4 5z" fill="#000"/><text x="217" y="113">SPX500,H1&#160; 4115.73 4116.49 4112.23 4112.73</text>`;
  g += `<text class="copy-line" x="206" y="126">Copyright ?http://www.pointzero-trading.com</text>`;
  document.getElementById('chart').innerHTML = g;

  // memory bars in the status bar
  let kb = '';
  for (let i = 0; i < 11; i++) {
    const h = 4 + i * 1.100;
    kb += `<rect x="${i * 2.200}" y="0" width="1.600" height="${15 - h}" fill="#7a9a28"/><rect x="${i * 2.200}" y="${15 - h}" width="1.600" height="${h}" fill="#a8281c"/>`;
  }
  document.getElementById('kbBars').innerHTML = kb;
</script>
</body>
</html>
